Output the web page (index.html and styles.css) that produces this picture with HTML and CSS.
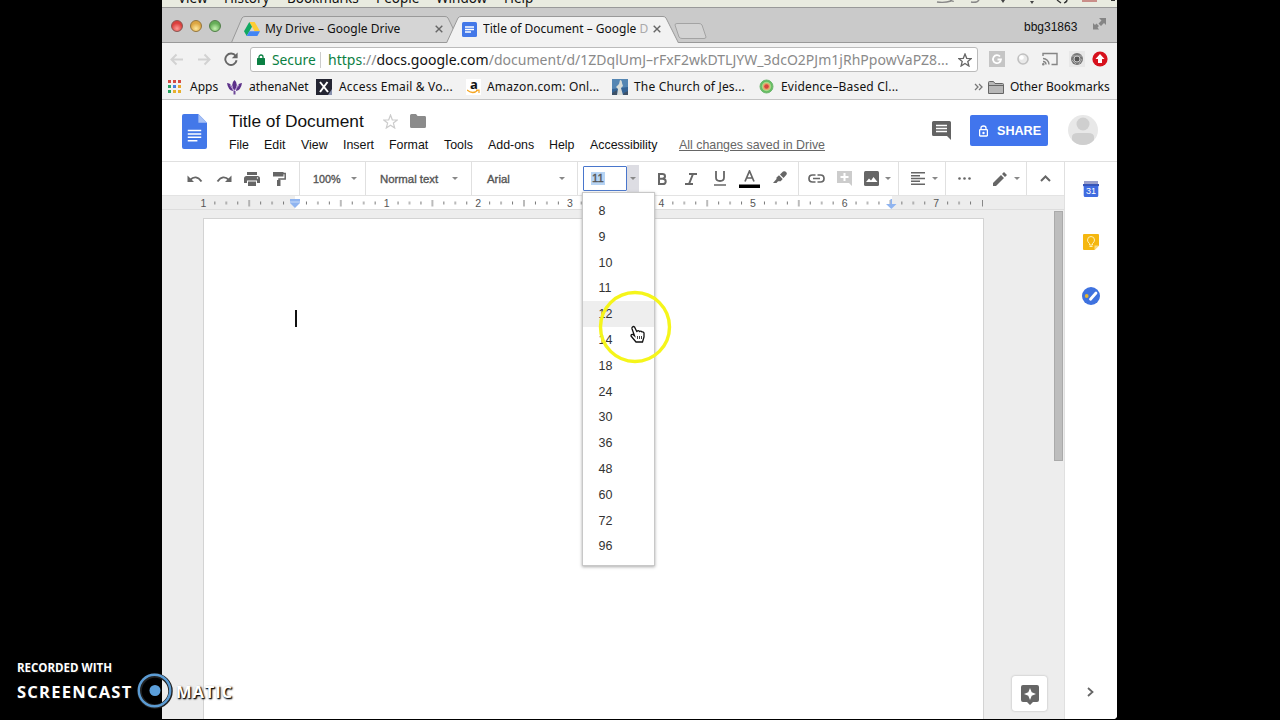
FILE: index.html
```
<!DOCTYPE html>
<html lang="en">
<head>
<meta charset="utf-8">
<title>Title of Document - Google Docs</title>
<link rel="stylesheet" href="styles.css">
</head>
<body>
<div class="window">
  <div class="menubar">
    <span>View</span><span>History</span><span>Bookmarks</span><span>People</span><span>Window</span><span>Help</span>
    <svg class="menu-extras" width="181" height="7" viewBox="936 0 181 7"><g fill="none" stroke="#888" stroke-width="1.4"><path d="M937 2q8 1 14-1M950 0q4 2 3 1M971 2q6 1 8-2"/></g><path d="M1001 0h4l-2 3zM1030 1h4l-2 3z" fill="#444"/><path d="M1057 0l4 3M1064 3q3-1 3-3" stroke="#333" stroke-width="1.3"/><path d="M1082 1h15" stroke="#a33"/><path d="M1111 0h4" stroke="#333" stroke-width="2"/></svg>
  </div>

  <div class="tabstrip">
    <svg class="tabshapes" width="955" height="34" viewBox="162 9 955 34">
      <path d="M231.500 42.500L242 18Q243 16.500 245 16.500H445Q447 16.500 448 18L460 42.500" fill="#d5d5d5" stroke="#999"/>
      <path d="M162 42.500H447" stroke="#999"/><path d="M678 42.500H1117" stroke="#999"/>
      <path d="M446.500 43L458 18Q459 16.500 461 16.500H663Q665 16.500 666 18L678.500 43" fill="#f2f2f2" stroke="#999"/>
      <path d="M677 23.500H699Q701 23.500 702 25L706 37Q706 38.500 704 38.500H682Q680 38.500 679 37L675 25Q675 23.500 677 23.500Z" fill="#d3d3d3" stroke="#a3a3a3"/>
    </svg>
    <div class="lights"><i class="light red"></i><i class="light amber"></i><i class="light green"></i></div>
    <div class="tab tab-drive">
      <svg width="16" height="14" viewBox="0 0 16 14"><path d="M5.300 0h5.400L16 9.300h-5.400z" fill="#fc3"/><path d="M5.300 0L0 9.300 2.700 14 8 4.700z" fill="#11a861"/><path d="M5.400 9.300H16L13.300 14H2.700z" fill="#4285f4"/></svg>
      <span class="tab-title t1">My Drive – Google Drive</span>
      <svg class="x" width="8" height="8" viewBox="0 0 8 8"><path d="M.7.700l6.600 6.600M7.300.700L.7 7.300"/></svg>
    </div>
    <div class="tab tab-doc">
      <svg width="15" height="15" viewBox="0 0 15 15"><rect width="15" height="15" rx="1.500" fill="#4378e8"/><path d="M3 5h9M3 7.500h9M3 10h6" stroke="#fff" stroke-width="1.300"/></svg>
      <span class="tab-title t2">Title of Document – Google <b>D</b></span>
      <svg class="x" width="8" height="8" viewBox="0 0 8 8"><path d="M.7.700l6.600 6.600M7.300.700L.7 7.300"/></svg>
    </div>
    <span class="user">bbg31863</span>
    <svg class="full" width="15" height="15" viewBox="0 0 15 15" fill="#858585"><path d="M7 1h7v7l-2-2-3 3-2.500-2.500 3-3zM1 6l2 2 1.500-1.500L7 9 5.500 10.500 7 12.500H1z"/></svg>
  </div>

  <div class="navbar">
    <svg width="14" height="13" viewBox="0 0 14 13" class="arrow"><path d="M13 6.500H1.500M6.500 1.500l-5 5 5 5"/></svg>
    <svg width="14" height="13" viewBox="0 0 14 13" class="arrow"><path d="M1 6.500h11.500M7.500 1.500l5 5-5 5"/></svg>
    <svg width="14" height="14" viewBox="0 0 14 14"><path d="M11.700 4A5.700 5.700 0 1 0 12.600 8.300" fill="none" stroke="#666" stroke-width="1.900"/><path d="M13.600.500v5.800H7.800z" fill="#666"/></svg>
    <div class="omnibox">
      <svg width="8" height="11" viewBox="0 0 8 11"><path d="M2 5V3a2 2 0 0 1 4 0v2" fill="none" stroke="#0b8043" stroke-width="1.300"/><rect y="4" width="8" height="7" rx=".5" fill="#0b8043"/></svg>
      <span class="secure">Secure</span><i class="bar"></i>
      <span class="url"><em>https</em>://<strong>docs.google.com</strong><span class="path">/document/d/1ZDqlUmJ–rFxF2wkDTLJYW_3dcO2PJm1jRhPpowVaPZ8...</span></span>
      <svg class="star" width="14" height="14" viewBox="0 0 14 14"><path d="M7 1l1.700 4.300 4.600.300-3.500 2.900 1.100 4.500L7 10.500 3.100 13l1.100-4.500L.7 5.600l4.600-.300z" fill="none" stroke="#666" stroke-width="1.300"/></svg>
    </div>
    <div class="exts">
      <svg width="16" height="16" viewBox="0 0 16 16"><rect width="16" height="16" fill="#c5c5c5"/><path d="M11 5.500A4 4 0 1 0 12 8.500H8.500" fill="none" stroke="#fff" stroke-width="1.800"/></svg>
      <svg width="14" height="14" viewBox="0 0 14 14"><circle cx="7" cy="7" r="5" fill="#e9e9e9" stroke="#c0c0c0" stroke-width="1.600"/><circle cx="5.500" cy="5.500" r="2.300" fill="#fff"/></svg>
      <svg width="16" height="14" viewBox="0 0 16 14" fill="none" stroke="#858585" stroke-width="1.400"><path d="M1 4V1.500h14v11H9.500M1 6.500a6 6 0 0 1 6 6M1 9.500a3 3 0 0 1 3 3"/><circle cx="1.300" cy="12.300" r=".6"/></svg>
      <svg width="16" height="16" viewBox="0 0 16 16"><rect width="16" height="16" fill="#e8e8e8"/><circle cx="8" cy="8" r="6" fill="#777"/><circle cx="8" cy="8" r="3" fill="#555" stroke="#ccc"/><path d="M3 5l10 0M3 9l4 4M13 8l-3 5" stroke="#bbb" stroke-width=".8"/></svg>
      <svg width="16" height="16" viewBox="0 0 16 16"><circle cx="8" cy="8" r="7.600" fill="#d7111c"/><path d="M8 3L3.500 8H6v4h4V8h2.500z" fill="#fff"/></svg>
    </div>
  </div>

  <div class="bookmarks">
    <svg width="15" height="13" viewBox="0 0 15 13"><path d="M1 0h3v3H1zM6 0h3v3H6zM11 0h3v3h-3z" fill="#d54b42"/><path d="M1 5h3v3H1z" fill="#2ba566"/><path d="M6 5h3v3H6z" fill="#477ee0"/><path d="M11 5h3v3h-3z" fill="#e8a72b"/><path d="M1 10h3v3H1z" fill="#25a560"/><path d="M6 10h3v3H6zM11 10h3v3h-3z" fill="#e8b02b"/></svg>
    <span>Apps</span>
    <svg width="15" height="16" viewBox="0 0 15 16"><path d="M7.500 1Q12 5 7.500 12Q3 5 7.500 1zM0 4q5 0 6 8Q1 11 0 4zM15 4q-5 0-6 8 5-1 6-8z" fill="#5b3089"/><path d="M3 6l4 6 5-6" stroke="#b79bd4" fill="none"/><path d="M7.500 12v3.500" stroke="#6e4a98" stroke-width="2"/></svg>
    <span>athenaNet</span>
    <svg width="16" height="16" viewBox="0 0 16 16"><rect width="16" height="16" fill="#242532"/><path d="M4 3l8 10M11.500 3L4 13" stroke="#fff" stroke-width="2"/><path d="M16 10v6h-4z" fill="#8890ad"/></svg>
    <span class="wide">Access Email &amp; Vo...</span>
    <span class="amazon"><b>a</b><svg width="13" height="5" viewBox="0 0 13 5"><path d="M0 1q6 5 11 0M9 1h3v3" fill="none" stroke="#f5a623" stroke-width="1.200"/></svg></span>
    <span class="wide">Amazon.com: Onl...</span>
    <svg width="16" height="16" viewBox="0 0 16 16"><rect width="16" height="16" fill="#356496"/><path d="M0 0h16v8L0 10z" fill="#5586b3"/><path d="M8 1q2 0 2 3l1 3-2 2 2 7H5l1-6-2-2 3-3z" fill="#d8dcd8"/><path d="M0 14l5-3v5H0zM12 14l4-2v4h-5z" fill="#3e5268"/></svg>
    <span class="wide">The Church of Jes...</span>
    <svg width="15" height="15" viewBox="0 0 15 15"><circle cx="7.500" cy="7.500" r="6.500" fill="#63bd61" stroke="#6fb66f"/><circle cx="7.500" cy="7.500" r="4.700" fill="#a8d58a"/><circle cx="7.500" cy="7.500" r="3.600" fill="#e7a868"/><circle cx="7.500" cy="7.500" r="2.300" fill="#d7443e"/></svg>
    <span class="wide">Evidence–Based Cl...</span>
    <svg width="9" height="8" viewBox="0 0 9 8"><path d="M1 1l3 3-3 3M5 1l3 3-3 3" fill="none" stroke="#777" stroke-width="1.300"/></svg>
    <svg width="16" height="14" viewBox="0 0 16 14"><path d="M.5 13.500V2.500q0-1 1-1h4l1.500 2h7.500q1 0 1 1v9z" fill="#b7b7b7" stroke="#666"/><path d="M1 5.500h14" stroke="#666"/></svg>
    <span>Other Bookmarks</span>
  </div>

  <header class="dochead">
    <svg class="doclogo" width="25" height="35" viewBox="0 0 26 36" preserveAspectRatio="none"><path d="M2 0h15l9 9v25q0 2-2 2H2q-2 0-2-2V2q0-2 2-2z" fill="#4378e9"/><path d="M17 0l9 9h-9z" fill="#a7c1f5"/><path d="M6 17h14M6 20.500h14M6 24h14M6 27.500h10" stroke="#fff" stroke-width="1.600"/></svg>
    <div class="titles">
      <div class="titlerow"><span class="doctitle">Title of Document</span>
        <svg class="dstar" width="15" height="15" viewBox="0 0 15 15"><path d="M7.500 1l1.800 4.800 5 .200-3.900 3.100 1.300 4.900-4.200-2.800L3.300 14l1.300-4.900L.7 6l5-.200z" fill="none" stroke="#ccc" stroke-width="1.200"/></svg>
        <svg width="16" height="14" viewBox="0 0 16 14"><path d="M1.500 0H6l1.600 2h7Q16 2 16 3.400v9Q16 14 14.500 14h-13Q0 14 0 12.500v-11Q0 0 1.500 0z" fill="#8b8b8b"/></svg>
      </div>
      <nav class="docmenu"><span>File</span><span>Edit</span><span>View</span><span>Insert</span><span>Format</span><span>Tools</span><span>Add-ons</span><span>Help</span><span>Accessibility</span><u>All changes saved in Drive</u></nav>
    </div>
    <svg class="comment" width="19" height="19" viewBox="0 0 19 19"><path d="M1.500 0h16Q19 0 19 1.500V19l-4-4H1.500Q0 15 0 13.500v-12Q0 0 1.500 0z" fill="#636363"/><path d="M4 4.500h11M4 7.500h11M4 10.500h11" stroke="#fff" stroke-width="1.500"/></svg>
    <button class="share"><svg width="9" height="12" viewBox="0 0 9 12"><path d="M2 5V3q0-2 2.500-2T7 3v2" fill="none" stroke="#fff" stroke-width="1.300"/><rect x=".6" y="4.600" width="7.800" height="6.400" rx=".6" fill="none" stroke="#fff" stroke-width="1.300"/><circle cx="4.500" cy="8" r="1.200" fill="#fff"/></svg><span>SHARE</span></button>
    <svg class="avatar" width="30" height="30" viewBox="0 0 30 30"><circle cx="15" cy="15" r="15" fill="#e8e8e8"/><circle cx="15" cy="9" r="6.500" fill="#cfcfcf"/><path d="M4 25v-3q0-4 6-4h10q6 0 6 4v3q-4 5-11 5T4 25z" fill="#cfcfcf"/></svg>
  </header>

  <div class="below">
    <main class="editor">
      <div class="toolbar">
        <div class="group g1">
          <svg width="16" height="8" viewBox="0 0 16 8"><path d="M3 5Q9-1 14.500 6.500" fill="none" stroke="#666" stroke-width="1.900"/><path d="M.5.500V7H7z" fill="#666"/></svg>
          <svg width="16" height="8" viewBox="0 0 16 8"><path d="M13 5Q7-1 1.500 6.500" fill="none" stroke="#666" stroke-width="1.900"/><path d="M15.500.500V7H9z" fill="#666"/></svg>
          <svg width="16" height="14" viewBox="0 0 16 14" fill="#666"><path d="M3 0h10v3H3zM2.500 4h11Q16 4 16 6.500V11h-3V8.500H3V11H0V6.500Q0 4 2.500 4z"/><path d="M4 9.500h8V14H4z"/><circle cx="13.500" cy="6" r=".7" fill="#fff"/></svg>
          <svg width="13" height="14" viewBox="0 0 13 14"><path d="M0 0h10.500v4.500H0z" fill="#666"/><path d="M10 1.500h2.200V7H6v2" fill="none" stroke="#666" stroke-width="1.500"/><path d="M4 8h3.500v6H4z" fill="#666"/></svg>
        </div>
        <div class="group g2"><span>100%</span><i class="caret"></i></div>
        <div class="group g3"><span>Normal text</span><i class="caret"></i></div>
        <div class="group g4"><span>Arial</span><i class="caret"></i></div>
        <div class="group g5"><div class="sizebox"><span>11</span></div><div class="sizearrow"><i class="caret"></i></div></div>
        <div class="group g6">
          <svg width="10" height="12" viewBox="0 0 10 12"><path d="M1 1h4.300q2.700 0 2.700 2.300T5.300 5.800H1M1 5.800h4.600Q8.700 5.800 8.700 8.400T5.600 11H1M2 1v10" fill="none" stroke="#666" stroke-width="2"/></svg>
          <svg width="12" height="12" viewBox="0 0 12 12"><path d="M4 1H12M0 11h8M8 1L4 11" fill="none" stroke="#666" stroke-width="2"/></svg>
          <svg width="12" height="15" viewBox="0 0 12 15"><path d="M2 0v6.500Q2 10 6 10t4-3.500V0" fill="none" stroke="#666" stroke-width="1.800"/><path d="M0 14h12" stroke="#666" stroke-width="1.500"/></svg>
          <svg width="21" height="18" viewBox="0 0 21 18"><path d="M6 11.500L10.500 1 15 11.500M7.700 8h5.800" fill="none" stroke="#666" stroke-width="1.700"/><path d="M0 14.500h21v3.500H0z" fill="#000"/></svg>
          <svg class="marker" width="14" height="13" viewBox="0 0 14 13" fill="#666"><path d="M10 .500Q12-.5 13.300 1.200T12.800 4.500L10.500 7 7 3.500zM6 4.300L9.700 8l-2 2.200H5L3.500 12H0l3.500-4V6.500z"/></svg>
        </div>
        <div class="group g7">
          <svg width="17" height="9" viewBox="0 0 17 9" fill="none" stroke="#666" stroke-width="1.700"><path d="M7.500 1H4.500Q1 1 1 4.500T4.500 8h3M9.500 1h3Q16 1 16 4.500T12.500 8h-3M5 4.500h7"/></svg>
          <svg width="15" height="15" viewBox="0 0 15 15"><path d="M0 0h15v15l-3-3H0z" fill="#ccc"/><path d="M7.500 2v8M3.500 6h8" stroke="#fff" stroke-width="2"/></svg>
          <svg width="15" height="15" viewBox="0 0 15 15"><rect width="15" height="15" rx="1.500" fill="#666"/><path d="M2 11l3-3.500 2 2L9.500 6l4 5z" fill="#fff"/></svg>
          <i class="caret"></i>
        </div>
        <div class="group g8"><svg width="14" height="13" viewBox="0 0 14 13"><path d="M0 .800h14M0 3.700h9M0 6.500h14M0 9.300h9M0 12.200h14" stroke="#666" stroke-width="1.400"/></svg><i class="caret"></i></div>
        <div class="group g9"><svg width="13" height="3" viewBox="0 0 13 3" fill="#666"><circle cx="1.500" cy="1.500" r="1.300"/><circle cx="6.500" cy="1.500" r="1.300"/><circle cx="11.500" cy="1.500" r="1.300"/></svg><svg width="14" height="14" viewBox="0 0 14 14" fill="#666"><path d="M0 11l8-8 3 3-8 8H0zM9 2l2-2 3 3-2 2z"/></svg><i class="caret"></i></div>
        <div class="group g10"><svg width="11" height="7" viewBox="0 0 11 7"><path d="M1 6l4.500-4.500L10 6" fill="none" stroke="#666" stroke-width="2"/></svg></div>
      </div>
      <svg class="ruler" width="902" height="14" viewBox="162 196 902 14">
        <defs><pattern id="ticks" x="203.400" y="196" width="91.600" height="14" patternUnits="userSpaceOnUse"><path d="M11.450 5.500v3M22.900 5.500v3M34.350 5.500v3M57.250 5.500v3M68.700 5.500v3M80.150 5.500v3" stroke="#777"/><path d="M45.800 4v6.500" stroke="#777"/></pattern></defs>
        <rect x="162" y="196" width="902" height="14" fill="#ededed"/><rect x="295" y="196" width="597" height="13" fill="#fff"/>
        <rect x="205" y="196" width="776" height="14" fill="url(#ticks)"/><path d="M982.500 200v6.500" stroke="#888"/><path d="M162 209.500h902" stroke="#ddd"/>
        <g class="rnum"><text x="203.500" y="207">1</text><text x="386.600" y="207">1</text><text x="478.200" y="207">2</text><text x="569.800" y="207">3</text><text x="661.400" y="207">4</text><text x="753" y="207">5</text><text x="844.600" y="207">6</text><text x="936.200" y="207">7</text></g>
        <path d="M290 199h10v4l-5 5-5-5z" fill="#8fb4f0"/><path d="M290 202h10" stroke="#c9dcf9"/><path d="M890.500 199h1.500v5h4.500l-5.200 5-5.300-5h4.500z" fill="#8fb4f0"/>
      </svg>
      <div class="canvas">
        <div class="page"><i class="textcursor"></i></div>
        <div class="gutter"><button class="explore"><svg width="18" height="20" viewBox="0 0 18 20"><path d="M2 0h14q2 0 2 2v13q0 2-2 2h-4l-3 3-3-3H2q-2 0-2-2V2Q0 0 2 0z" fill="#666"/><path d="M9 3l1.700 4.300L15 9l-4.300 1.700L9 15l-1.700-4.300L3 9l4.300-1.700z" fill="#fff"/></svg></button></div>
        <div class="scroll"><i></i></div>
      </div>
    </main>
    <aside class="side">
      <svg width="16" height="16" viewBox="0 0 16 16"><path d="M1 0h14v4H1z" fill="#9a9fca"/><path d="M0 3h16l-.7 3v8.500q0 1.500-1.500 1.500H2.200Q.7 16 .7 14.500V6z" fill="#3f6be0"/><path d="M0 3h16v2H0z" fill="#3655b8"/><text x="8" y="12.700" class="cal">31</text></svg>
      <svg width="16" height="16" viewBox="0 0 16 16"><path d="M1 0h14q1 0 1 1v10.500L11.500 16H1q-1 0-1-1V1q0-1 1-1z" fill="#f5b70f"/><path d="M11.500 16v-4.500H16z" fill="#fbdc83"/><path d="M6.500 9.500Q4.500 8 4.500 6a3.500 3.500 0 0 1 7 0Q11.500 8 9.500 9.500V11h-3zM6.500 12.500h3" fill="none" stroke="#fff0b7"/></svg>
      <svg width="18" height="18" viewBox="0 0 18 18"><circle cx="9" cy="9" r="9" fill="#3f72df"/><path d="M8.500 12.200L14 6" stroke="#fff" stroke-width="2.800" stroke-linecap="round"/><circle cx="4.700" cy="9" r="1.900" fill="#e5b52f"/></svg>
      <svg class="sidearrow" width="7" height="10" viewBox="0 0 7 10"><path d="M1 1l4.500 4L1 9" fill="none" stroke="#666" stroke-width="1.800"/></svg>
    </aside>
  </div>
</div>

<ul class="sizes"><li>8</li><li>9</li><li>10</li><li>11</li><li class="hover">12</li><li>14</li><li>18</li><li>24</li><li>30</li><li>36</li><li>48</li><li>60</li><li>72</li><li>96</li></ul>

<svg class="pointer" width="76" height="76" viewBox="597 289 76 76"><circle cx="635" cy="327" r="34.500" fill="none" stroke="#f5f51a" stroke-width="3.400"/><path d="M632.500 327q1-1 2 0l2.500 5v-1q1.500-1 2.500.500 1.500-1 2.500.500 1.500-.5 2 1v4l-1.500 5h-6.500l-5-6q0-2 2-1.500l1.500 1.200-2.500-7q-.3-1 .5-1.700z" fill="#fff" stroke="#111" stroke-width="1.300"/><path d="M637.500 336v3M639.500 336v3M641.500 336v3" stroke="#111" stroke-width=".8"/></svg>

<div class="watermark">
  <div class="recorded">RECORDED WITH</div>
  <div class="brand"><span class="w1">SCREENCAST</span><svg width="36" height="36" viewBox="0 0 36 36"><circle cx="18" cy="18" r="15.500" fill="none" stroke="#222" stroke-width="4.500"/><circle cx="17.500" cy="17.500" r="15.700" fill="none" stroke="#5b9bd3" stroke-width="2.400"/><circle cx="18" cy="17.500" r="5.500" fill="#5b9fdb"/></svg><span class="w2">MATIC</span></div>
</div>
</body>
</html>
```
FILE: styles.css
```
* { box-sizing: border-box; }
body { margin: 0; width: 1280px; height: 720px; overflow: hidden; background: #000; font-family: "Liberation Sans", Arial, sans-serif; color: #111; }
svg { display: block; flex: none; }
button { padding: 0; border: 0; font: inherit; }
.window { width: 955px; height: 719px; margin-left: 162px; background: #fff; display: flex; flex-direction: column; overflow: hidden; border-bottom-right-radius: 4px; }

.menubar { height: 8px; flex: none; overflow: hidden; background: #e9ebe0; border-bottom: 1px solid #999; display: grid; grid-template-columns: 46px 63px 89px 60px 68px 432px 181px; padding-left: 16px; font: 13.5px/18px "Noto Sans", sans-serif; white-space: nowrap; }
.menubar span { margin-top: -11px; }

.tabstrip { height: 35px; flex: none; position: relative; background: #cacaca; display: flex; align-items: center; font: 12px "Noto Sans", sans-serif; white-space: nowrap; }
.tabstrip > * { position: relative; }
.tabstrip .tabshapes { position: absolute; left: 0; top: 1px; }
.lights { display: flex; gap: 7px; margin: 0 0 0 9px; width: 73px; }
.light { width: 12px; height: 12px; border-radius: 50%; border: 1px solid #8b5550; }
.red { background: radial-gradient(circle at 50% 75%, #ff9a94, #db3f3d 60%); }
.amber { background: radial-gradient(circle at 50% 75%, #ffe89b, #dca541 60%); border-color: #94763d; }
.green { background: radial-gradient(circle at 50% 75%, #c6f3b0, #65ad57 60%); border-color: #507e47; }
.tab { display: grid; align-items: center; grid-template-columns: 21px 170px 8px; height: 24px; margin-top: 7px; flex: none; }
.tab-drive { width: 218px; }
.tab-doc { grid-template-columns: 21px 170px 8px; width: 562px; }
.tab-title { overflow: hidden; line-height: 24px; }
.t2 b { font-weight: 400; color: #aaa; }
.x path { stroke: #666; stroke-width: 1.4; }
.user { font: 12px "Liberation Sans", sans-serif; width: 68px; margin-top: 2px; flex: none; }
.full { margin-top: -3px; }

.navbar { height: 33px; flex: none; background: #f2f2f2; display: flex; align-items: center; padding: 0 0 1px 8px; font: 14px "Noto Sans", sans-serif; }
.navbar > svg { margin-right: 13px; }
.navbar > svg:nth-of-type(3) { margin-right: 12px; }
.arrow { fill: none; stroke: #d2d2d2; stroke-width: 2; }
.omnibox { width: 728px; height: 25px; border: 1px solid #bbb; border-radius: 3px; background: #fff; display: flex; align-items: center; padding-left: 6px; white-space: nowrap; margin-top: 1px; }
.secure { color: #0b8043; width: 48px; margin-left: 7px; font-size: 13.8px; }
.bar { width: 1px; height: 16px; background: #ccc; margin-right: 7px; }
.url { color: #8a8a8a; width: 630px; letter-spacing: .02px; }
.url em { font-style: normal; color: #0b8043; }
.url strong { font-weight: 400; color: #111; }
.exts { display: grid; grid-template-columns: 27px 26px 27px 23px 16px; align-items: center; margin-left: 11px; }

.bookmarks { height: 24px; flex: none; background: #f2f2f2; border-bottom: 1px solid #c4c4c4; display: grid; align-items: center; grid-template-columns: 23px 37px 22px 67px 23px 127px 21px 125px 22px 125px 22px 193px 14px 22px 106px; padding: 0 0 2px 5px; font: 12px "Noto Sans", sans-serif; white-space: nowrap; }
.wide { letter-spacing: .18px; }
.amazon { display: block; width: 15px; height: 16px; background: #fff; }
.amazon b { display: block; font: 700 13px/10px "Open Sans", sans-serif; padding-left: 4px; }
.amazon svg { margin-left: 1px; }

.dochead { height: 62px; flex: none; border-bottom: 1px solid #e0e0e0; display: flex; padding-left: 20px; background: #fff; }
.doclogo { margin: 14px 22px 0 0; }
.titles { width: 703px; }
.titlerow { display: flex; align-items: center; height: 24px; margin-top: 9px; }
.doctitle { font-size: 17.3px; width: 154px; white-space: nowrap; }
.dstar { margin-right: 12px; }
.docmenu { display: grid; grid-template-columns: 35px 37px 42px 46px 55px 44px 61px 41px 89px 150px; font-size: 12.4px; line-height: 18px; margin-top: 3px; white-space: nowrap; }
.docmenu u { color: #666; }
.comment { margin-top: 21px; }
.share { width: 78px; height: 31px; margin: 15px 0 0 19px; border-radius: 2px; background: #4175ed; color: #fff; display: flex; align-items: center; padding-left: 9px; font-weight: 700; font-size: 12.6px; gap: 9px; }
.avatar { margin: 15px 0 0 20px; }

.below { flex: 1; display: flex; min-height: 0; }
.editor { width: 902px; display: flex; flex-direction: column; }
.toolbar { height: 34px; flex: none; display: flex; background: #fff; border-bottom: 1px solid #e3e3e3; color: #555; font-size: 11.4px; -webkit-text-stroke: .35px #555; }
.group { display: grid; align-items: center; border-right: 1px solid #e0e0e0; white-space: nowrap; flex: none; }
.caret { width: 0; height: 0; border: 3px solid transparent; border-top-color: #888; border-bottom: 0; }
.g1 { width: 138px; grid-template-columns: 29px 28px 29px 13px; padding-left: 25px; }
.g2 { width: 66px; grid-template-columns: 38px 6px; padding-left: 13px; font-size: 10.8px; }
.g3 { width: 106px; grid-template-columns: 72px 6px; padding-left: 14px; }
.g4 { width: 106px; grid-template-columns: 72px 6px; padding-left: 15px; }
.g5 { width: 64px; grid-template-columns: 44px 12px; padding-left: 5px; border: 0; }
.sizebox { height: 25px; border: 1px solid #4976cc; border-radius: 1px; background: #fff; padding: 5px 0 0 7px; }
.sizebox span { display: inline-block; background: #b7d4f4; line-height: 13px; padding: 0 1px; }
.sizearrow { height: 27px; background: #dddde3; display: flex; align-items: center; justify-content: center; }
.g6 { width: 157px; grid-template-columns: 28px 29px 25px 35px 14px; padding-left: 15px; }
.marker { margin: -2px 0 0 -1px; }
.g7 { width: 100px; grid-template-columns: 29px 27px 21px 6px; padding-left: 9px; }
.g8 { width: 47px; grid-template-columns: 21px 6px; padding-left: 12px; }
.g9 { width: 81px; grid-template-columns: 35px 21px 6px; padding-left: 12px; }
.g10 { padding-left: 13px; border: 0; }
.ruler { flex: none; }
.rnum { font: 10.5px "Liberation Sans", sans-serif; fill: #555; text-anchor: middle; }
.canvas { flex: 1; display: flex; background: #ededed; min-height: 0; }
.page { width: 781px; margin: 8px 0 0 41px; background: #fff; border: 1px solid #d3d3d3; border-bottom: 0; padding: 91px 0 0 91px; }
.textcursor { display: block; width: 2px; height: 17px; background: #111; }
.gutter { width: 70px; display: flex; align-items: flex-end; padding: 0 0 8px 28px; }
.explore { width: 35px; height: 35px; background: #fff; border-radius: 3px; box-shadow: 0 0 2px #aaa; display: flex; align-items: center; justify-content: center; padding-top: 2px; }
.scroll { width: 10px; padding: 1px 0 0; }
.scroll i { display: block; width: 9px; height: 250px; background: #bdbdbd; border: 1px solid #aaa; }
.side { width: 53px; border-left: 1px solid #e0e0e0; background: #fff; display: flex; flex-direction: column; align-items: center; padding: 19px 1px 0 0; gap: 37px; }
.cal { font: 9px "Liberation Sans", sans-serif; fill: #fff; text-anchor: middle; }
.sidearrow { margin: auto 0 22px; }

.sizes { position: absolute; left: 582px; top: 192px; width: 73px; height: 374px; margin: 0; padding: 5px 0; list-style: none; border: 1px solid #c8c8c8; background: #fff; box-shadow: 0 1px 3px #aaa; font-size: 12.5px; color: #333; }
.sizes li { height: 25.8px; line-height: 26px; padding-left: 15.5px; }
.sizes .hover { background: #eeeeee; }
.pointer { position: absolute; left: 597px; top: 289px; }

.watermark { position: absolute; left: 17px; top: 660px; color: #fff; font-family: "Open Sans", sans-serif; font-weight: 700; white-space: nowrap; text-shadow: 1px 1px 2px #000, 1px 1px 1px #333; }
.recorded { font-size: 11.5px; line-height: 16px; }
.brand { display: flex; align-items: center; font-size: 16.5px; height: 30px; letter-spacing: 1.25px; }
.w1 { width: 120px; }
.w2 { margin-left: 3px; letter-spacing: .9px; }
```
